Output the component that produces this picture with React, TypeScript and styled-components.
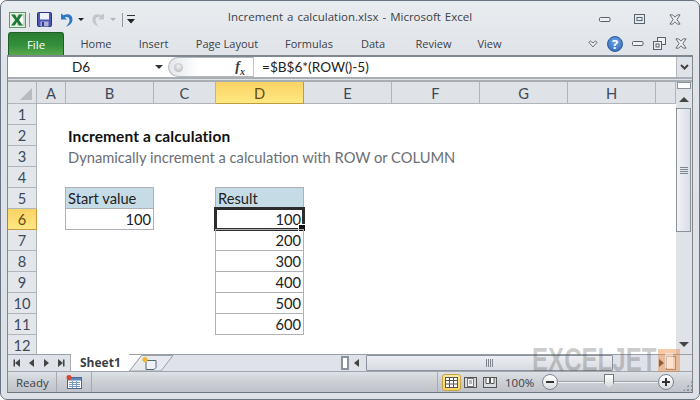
import React from "react";
import styled, { createGlobalStyle } from "styled-components";

const GlobalStyle = createGlobalStyle`
  html, body {
    margin: 0;
    padding: 0;
    background: #fff;
  }
  * {
    box-sizing: border-box;
  }
`;

const columns = ["A", "B", "C", "D", "E", "F", "G", "H", ""];
const rows = [1, 2, 3, 4, 5, 6, 7, 8, 9, 10, 11, 12];
const results: Record<number, string> = {
  6: "100",
  7: "200",
  8: "300",
  9: "400",
  10: "500",
  11: "600",
};

const App: React.FC = () => {
  function renderB(row: number) {
    if (row === 2) return <Cell $variant="title">Increment a calculation</Cell>;
    if (row === 3)
      return (
        <Cell $variant="subtitle">
          Dynamically increment a calculation with ROW or COLUMN
        </Cell>
      );
    if (row === 5) return <Cell $variant="head">Start value</Cell>;
    if (row === 6) return <Cell $variant="number">100</Cell>;
    return <Cell />;
  }

  function renderD(row: number) {
    if (row === 5) return <Cell $variant="head">Result</Cell>;
    if (results[row]) {
      return (
        <Cell $variant="number" $active={row === 6}>
          {results[row]}
        </Cell>
      );
    }
    return <Cell />;
  }

  return (
    <Window>
      <GlobalStyle />
      <TitleBar>
        <QuickAccess>
          <QatItem $gap={0}>
            <ExcelLogo />
          </QatItem>
          <QatDivider $gap={3} />
          <QatItem $gap={7}>
            <SaveIcon />
          </QatItem>
          <QatItem $gap={8}>
            <UndoIcon />
          </QatItem>
          <SmallCaret $gap={5} $muted={false} />
          <QatItem $gap={8}>
            <RedoIcon />
          </QatItem>
          <SmallCaret $gap={5} $muted />
          <QatDivider $gap={6} />
          <QatItem $gap={4}>
            <CustomizeIcon />
          </QatItem>
        </QuickAccess>
        <WindowTitle>Increment a calculation.xlsx - Microsoft Excel</WindowTitle>
        <WindowButtons>
          <MinimizeIcon />
          <MaximizeIcon />
          <CloseIcon />
        </WindowButtons>
      </TitleBar>

      <TabsRow>
        <FileTab>File</FileTab>
        <RibbonTab $w={64}>Home</RibbonTab>
        <RibbonTab $w={51}>Insert</RibbonTab>
        <RibbonTab $w={96}>Page Layout</RibbonTab>
        <RibbonTab $w={68}>Formulas</RibbonTab>
        <RibbonTab $w={60}>Data</RibbonTab>
        <RibbonTab $w={61}>Review</RibbonTab>
        <RibbonTab $w={51}>View</RibbonTab>
        <TabTools>
          <ChevronHeart />
          <HelpCircle>?</HelpCircle>
          <MinimizeIcon />
          <RestoreIcon />
          <CloseIcon />
        </TabTools>
      </TabsRow>

      <Frame>
        <FormulaBar>
          <NameBox>
            D6
            <NameCaret />
          </NameBox>
          <FormulaKnob>
            <KnobDot />
            <FxLabel>
              f<sub>x</sub>
            </FxLabel>
          </FormulaKnob>
          <FormulaInput>=$B$6*(ROW()-5)</FormulaInput>
          <FormulaExpand>
            <ExpandChevron />
          </FormulaExpand>
        </FormulaBar>

        <SheetArea>
          <Grid>
            <CornerCell>
              <CornerTriangle />
            </CornerCell>
            {columns.map((col, i) => (
              <ColumnHeader key={i} $active={col === "D"}>
                {col}
              </ColumnHeader>
            ))}
            {rows.map((row) => (
              <React.Fragment key={row}>
                <RowHeader $active={row === 6}>{row}</RowHeader>
                <Cell />
                {renderB(row)}
                <Cell />
                {renderD(row)}
                <Cell />
                <Cell />
                <Cell />
                <Cell />
                <Cell />
              </React.Fragment>
            ))}
          </Grid>
          <VerticalScroll>
            <SplitBoxTop>
              <span />
            </SplitBoxTop>
            <ArrowSlot>
              <ArrowUp />
            </ArrowSlot>
            <VerticalThumb>
              <Grip />
            </VerticalThumb>
            <ArrowSlotBottom>
              <ArrowDown />
            </ArrowSlotBottom>
          </VerticalScroll>
        </SheetArea>

        <SheetTabsRow>
          <NavButtons>
            <NavFirst />
            <NavPrev />
            <NavNext />
            <NavLast />
          </NavButtons>
          <SheetTab>Sheet1</SheetTab>
          <NewSheetTab />
          <TabStripFill />
          <SplitBoxSide>
            <span />
          </SplitBoxSide>
          <HorizontalTrack>
            <NavPrev />
            <HorizontalThumb>
              <VerticalGrip />
            </HorizontalThumb>
            <TrackEnd>
              <NavNext />
              <SplitBoxEnd>
                <span />
              </SplitBoxEnd>
            </TrackEnd>
          </HorizontalTrack>
          <ScrollCorner />
        </SheetTabsRow>

        <StatusBar>
          <ReadyLabel>Ready</ReadyLabel>
          <MacroSlot>
            <MacroIcon />
          </MacroSlot>
          <StatusRight>
            <ViewButton $active>
              <NormalViewIcon />
            </ViewButton>
            <ViewButton>
              <PageLayoutIcon />
            </ViewButton>
            <ViewButton>
              <PageBreakIcon />
            </ViewButton>
            <ZoomLabel>100%</ZoomLabel>
            <ZoomRound>
              <MinusGlyph />
            </ZoomRound>
            <ZoomLine>
              <ZoomThumb />
            </ZoomLine>
            <ZoomRound>
              <PlusGlyph />
            </ZoomRound>
            <ResizeGrip />
          </StatusRight>
        </StatusBar>
      </Frame>

      <Watermark>
        <WatermarkText>EXCELJET</WatermarkText>
        <WatermarkBox>
          <WatermarkMark />
        </WatermarkBox>
      </Watermark>
    </Window>
  );
};

export default App;

/* icons */

const ExcelLogo = () => (
  <svg width="17" height="16" viewBox="0 0 17 16">
    <rect x="0.500" y="0.500" width="16" height="15" fill="#e8f1e4" stroke="#5e9a68" />
    <rect x="9" y="3" width="6" height="10" fill="#fff" stroke="#9cc09f" />
    <path d="M2 2.500h4l2 3.400 2-3.400h3.500L10 8l3.800 5.500H10L8 10l-2.200 3.500H2L6.200 8z" fill="#1f7a38" />
  </svg>
);

const SaveIcon = () => (
  <svg width="15" height="15" viewBox="0 0 15 15">
    <rect x="0.500" y="0.500" width="14" height="14" rx="1" fill="#4a55b4" stroke="#2b3480" />
    <rect x="3" y="1" width="9" height="6.500" fill="#eef0fa" />
    <rect x="3.500" y="9.500" width="8" height="5" fill="#aab0dc" />
    <rect x="5" y="10" width="2" height="4" fill="#34398a" />
  </svg>
);

const UndoIcon = () => (
  <svg width="13" height="16" viewBox="0 0 13 16">
    <path
      d="M1 1.500v6h6L4.800 5.300C7.500 4.200 10 6 9.500 9c-.3 2-1.800 3.800-3.500 5.500 3.500-.8 6.500-3.500 6.500-7.300C12.500 3 8 .8 3.500 3.300z"
      fill="#2f78c4"
    />
  </svg>
);

const RedoIcon = () => (
  <svg width="13" height="16" viewBox="0 0 13 16">
    <path
      d="M12 1.500v6H6l2.200-2.200C5.500 4.200 3 6 3.500 9c.3 2 1.800 3.800 3.500 5.500C3.500 13.700.5 11 .5 7.200.5 3 5 .8 9.500 3.300z"
      fill="#c3c7cc"
    />
  </svg>
);

const CustomizeIcon = () => (
  <svg width="8" height="9" viewBox="0 0 8 9">
    <rect x="0" y="0" width="8" height="1" fill="#333" />
    <path d="M0 4h8L4 8.500z" fill="#222" />
  </svg>
);

const MinimizeIcon = () => (
  <svg width="12" height="7" viewBox="0 0 12 7">
    <rect x="0.500" y="1.500" width="10.500" height="4" rx="1" fill="#eef0f3" stroke="#59626d" />
  </svg>
);

const MaximizeIcon = () => (
  <svg width="12" height="11" viewBox="0 0 12 11">
    <rect x="0.500" y="0.500" width="10" height="9" fill="none" stroke="#59626d" />
    <rect x="3" y="3.500" width="5" height="3" fill="#eef0f3" stroke="#59626d" />
  </svg>
);

const RestoreIcon = () => (
  <svg width="13" height="13" viewBox="0 0 13 13">
    <rect x="4.500" y="0.500" width="8" height="7" fill="#eef0f3" stroke="#59626d" />
    <rect x="0.500" y="4.500" width="8" height="8" fill="#eef0f3" stroke="#59626d" />
    <rect x="3" y="7" width="3" height="3" fill="none" stroke="#59626d" />
  </svg>
);

const CloseIcon = () => (
  <svg width="12" height="11" viewBox="0 0 13 11">
    <path
      d="M1 .5h3l2.500 2.500L9 .5h3L8.500 5.500 12 10.500H9L6.500 8 4 10.500H1L4.500 5.500z"
      fill="#eef0f3"
      stroke="#59626d"
    />
  </svg>
);

const ChevronHeart = () => (
  <svg width="10" height="8" viewBox="0 0 12 9">
    <path d="M1 2.500L3 1l3 2.200L9 1l2 1.500L6 8z" fill="#eef0f3" stroke="#4d5660" />
  </svg>
);

const NewSheetTab = () => (
  <svg width="45" height="17" viewBox="0 0 45 17">
    <path d="M0 0h12L0 16z" fill="#fff" />
    <path d="M0.500 16L12.500 .5H44L32 16z" fill="#e6e9ee" stroke="#9aa0a7" />
    <path d="M17 5.500h10v7l-2 2H17z" fill="#eef2f7" stroke="#55657a" />
    <circle cx="16" cy="4.500" r="2.600" fill="#f2b632" />
  </svg>
);

const MacroIcon = () => (
  <svg width="16" height="14" viewBox="0 0 16 14">
    <rect x="1.500" y="2.500" width="14" height="11" fill="#fff" stroke="#4a6a94" />
    <rect x="2" y="3" width="13" height="2.500" fill="#5f86b8" />
    <path d="M3 7.500h11M3 9.500h11M3 11.500h11M6.500 6v7M10.500 6v7" stroke="#7c9cc4" />
    <circle cx="3" cy="2.500" r="2.500" fill="#d8452a" />
  </svg>
);

const NormalViewIcon = () => (
  <svg width="13" height="11" viewBox="0 0 13 11">
    <rect x="0.500" y="0.500" width="12" height="10" fill="#fff" stroke="#555" />
    <path d="M0.500 3.500h12M0.500 7h12M4.500 .5v10M8.500 .5v10" stroke="#555" />
  </svg>
);

const PageLayoutIcon = () => (
  <svg width="13" height="11" viewBox="0 0 13 11">
    <rect x="0.500" y="0.500" width="12" height="10" fill="#d8dadd" stroke="#555" />
    <rect x="3.500" y="1.500" width="6" height="8" fill="#f4f5f6" stroke="#777" />
    <path d="M5 4h3M5 6h3" stroke="#777" />
  </svg>
);

const PageBreakIcon = () => (
  <svg width="14" height="11" viewBox="0 0 14 11">
    <rect x="0.500" y="0.500" width="13" height="10" fill="#d8dadd" stroke="#555" />
    <path d="M3 .5h3.500v6H3zM7.500 .5H11v6H7.500z" fill="#fff" stroke="#555" />
  </svg>
);

const ExpandChevron = () => (
  <svg width="9" height="6" viewBox="0 0 9 6">
    <path d="M1 1l3.500 3.500L8 1" fill="none" stroke="#444" strokeWidth="2" />
  </svg>
);

/* layout */

const Window = styled.div`
  position: relative;
  width: 700px;
  height: 400px;
  overflow: hidden;
  display: flex;
  flex-direction: column;
  background: linear-gradient(#e9ecef, #dfe3e8 60px, #dde1e6);
  border: 1px solid #6a7480;
  border-radius: 7px;
  font-family: "Open Sans", "Liberation Sans", sans-serif;
  color: #3b3f46;
`;

const TitleBar = styled.div`
  position: relative;
  height: 31px;
  flex: none;
  display: flex;
  align-items: center;
  padding-left: 8px;
`;

const QuickAccess = styled.div`
  display: flex;
  align-items: center;
  margin-top: 6px;
`;

const QatItem = styled.div<{ $gap: number }>`
  display: flex;
  margin-left: ${(p) => p.$gap}px;
`;

const QatDivider = styled.div<{ $gap: number }>`
  width: 1px;
  height: 14px;
  margin-left: ${(p) => p.$gap}px;
  background: #8f979f;
`;

const SmallCaret = styled.span<{ $muted: boolean; $gap: number }>`
  width: 0;
  height: 0;
  margin-left: ${(p) => p.$gap}px;
  border-left: 3px solid transparent;
  border-right: 3px solid transparent;
  border-top: 3px solid ${(p) => (p.$muted ? "#b0b4b9" : "#222")};
`;

const WindowTitle = styled.div`
  position: absolute;
  left: 0;
  right: 0;
  top: 7px;
  text-align: center;
  font-size: 11.5px;
  line-height: 18px;
  color: #3c4148;
  word-spacing: 1px;
`;

const WindowButtons = styled.div`
  margin-left: auto;
  margin-top: 5px;
  width: 82px;
  margin-right: 18px;
  display: flex;
  align-items: center;
  justify-content: space-between;
`;

const TabsRow = styled.div`
  height: 23px;
  flex: none;
  display: flex;
  align-items: stretch;
  padding-left: 7px;
  padding-right: 12px;
`;

const FileTab = styled.div`
  width: 56px;
  display: flex;
  align-items: center;
  justify-content: center;
  padding-top: 1px;
  color: #fff;
  font-size: 11.5px;
  border: 1px solid #1f5d2b;
  border-bottom: 0;
  border-radius: 3px 3px 0 0;
  background: linear-gradient(#2a7d33, #348f3b 55%, #58a94b);
`;

const RibbonTab = styled.div<{ $w: number }>`
  width: ${(p) => p.$w}px;
  display: flex;
  align-items: center;
  justify-content: center;
  font-size: 11px;
  color: #3c4148;
`;

const TabTools = styled.div`
  margin-left: auto;
  display: flex;
  align-items: center;
  gap: 9px;
`;

const HelpCircle = styled.div`
  width: 16px;
  height: 16px;
  border-radius: 50%;
  display: flex;
  align-items: center;
  justify-content: center;
  color: #fff;
  font-size: 13px;
  font-weight: 700;
  background: radial-gradient(circle at 50% 35%, #6fa3e4, #2a66bb);
  border: 1px solid #2a5c9e;
`;

const Frame = styled.div`
  flex: 1;
  margin-left: 6px;
  margin-right: 6px;
  margin-bottom: 6px;
  display: flex;
  flex-direction: column;
  border-top: 2px solid #7f8791;
  border-left: 1px solid #7f8791;
  border-right: 1px solid #7f8791;
  border-bottom: 1px solid #6e7680;
  min-height: 0;
`;

const FormulaBar = styled.div`
  height: 22px;
  flex: none;
  display: flex;
  align-items: stretch;
  background: #fff;
  border-bottom: 2px solid #a9aeb4;
  font-family: Lato, "Open Sans", sans-serif;
  font-size: 13.6px;
  color: #222;
`;

const NameBox = styled.div`
  position: relative;
  width: 160px;
  padding-left: 64px;
  display: flex;
  align-items: center;
`;

const NameCaret = styled.span`
  position: absolute;
  right: 5px;
  top: 8px;
  border-left: 4px solid transparent;
  border-right: 4px solid transparent;
  border-top: 4px solid #333;
`;

const FormulaKnob = styled.div`
  width: 85px;
  display: flex;
  align-items: center;
  padding-left: 5px;
  padding-right: 8px;
  border: 1px solid #b5b9bf;
  border-right: 0;
  border-radius: 11px 0 0 11px;
  background: linear-gradient(90deg, #e4e6ea, #fff 35%);
`;

const KnobDot = styled.span`
  width: 9px;
  height: 9px;
  border-radius: 50%;
  background: radial-gradient(circle at 50% 40%, #f3f3f3, #a9adb2);
`;

const FxLabel = styled.div`
  margin-left: auto;
  font-family: "Liberation Serif", serif;
  font-style: italic;
  font-weight: 700;
  font-size: 14px;
  line-height: 18px;
  color: #3a3a3a;
  sub {
    font-size: 10px;
    line-height: 0;
  }
`;

const FormulaInput = styled.div`
  flex: 1;
  padding-left: 8px;
  display: flex;
  align-items: center;
  border-left: 1px solid #c3c7cc;
`;

const FormulaExpand = styled.div`
  width: 16px;
  display: flex;
  align-items: center;
  justify-content: center;
  background: #dfe2e6;
  border-left: 1px solid #b4b8bd;
`;

const SheetArea = styled.div`
  height: 274px;
  flex: none;
  display: flex;
  border-top: 2px solid #a9aeb4;
  margin-top: 1px;
`;

const Grid = styled.div`
  flex: 1;
  display: grid;
  grid-template-columns: 29px 29px 88px 62px 88px 88px 88px 88px 88px 1fr;
  grid-template-rows: 22px;
  grid-auto-rows: 21px;
  overflow: hidden;
  background: #fff;
  font-family: Lato, "Open Sans", sans-serif;
  font-size: 14.7px;
  color: #222;
`;

const CornerCell = styled.div`
  position: relative;
  background: #dfe2e6;
  border-right: 1px solid #b1b5ba;
  border-bottom: 1px solid #b1b5ba;
`;

const CornerTriangle = styled.span`
  position: absolute;
  right: 4px;
  bottom: 3px;
  border-left: 12px solid transparent;
  border-bottom: 12px solid #b8bcc1;
`;

const ColumnHeader = styled.div<{ $active?: boolean }>`
  display: flex;
  align-items: center;
  justify-content: center;
  color: ${(p) => (p.$active ? "#6a4a12" : "#3e4a5a")};
  background: ${(p) =>
    p.$active ? "linear-gradient(#fbd264, #ffe882)" : "#dfe2e6"};
  border-right: 1px solid ${(p) => (p.$active ? "#c49a3a" : "#b1b5ba")};
  border-bottom: 1px solid ${(p) => (p.$active ? "#c49a3a" : "#b1b5ba")};
`;

const RowHeader = styled.div<{ $active?: boolean }>`
  display: flex;
  align-items: center;
  justify-content: center;
  color: ${(p) => (p.$active ? "#6a4a12" : "#3e4a5a")};
  background: ${(p) =>
    p.$active ? "linear-gradient(#fbd264, #ffe882)" : "#e3e6ea"};
  border-right: 1px solid ${(p) => (p.$active ? "#c49a3a" : "#b1b5ba")};
  border-bottom: 1px solid ${(p) => (p.$active ? "#c49a3a" : "#b1b5ba")};
`;

type CellVariant = "title" | "subtitle" | "head" | "number";

const Cell = styled.div<{ $variant?: CellVariant; $active?: boolean }>`
  position: relative;
  display: flex;
  align-items: center;
  white-space: nowrap;
  padding: 0 2px;
  min-width: 0;
  ${(p) => p.$variant === "title" && "font-weight: 700; font-size: 15.5px; letter-spacing: 0.1px; color: #111;"}
  ${(p) => p.$variant === "subtitle" && "color: #6b6f75;"}
  ${(p) =>
    (p.$variant === "head" || p.$variant === "number") &&
    "margin: -1px 0 0 -1px; border: 1px solid #aeb1b5;"}
  ${(p) => p.$variant === "head" && "background: #c5dce7;"}
  ${(p) => p.$variant === "number" && "justify-content: flex-end;"}
  ${(p) =>
    p.$active &&
    `
    &::before {
      content: "";
      position: absolute;
      inset: -2px;
      border: 3px solid #2d2d2d;
    }
    &::after {
      content: "";
      position: absolute;
      right: -3px;
      bottom: -3px;
      width: 6px;
      height: 6px;
      background: #111;
      border: 1px solid #fff;
    }
  `}
`;

const VerticalScroll = styled.div`
  width: 16px;
  flex: none;
  display: flex;
  flex-direction: column;
  background: #dfe2e6;
`;

const SplitBoxTop = styled.div`
  height: 9px;
  padding: 0 1px;
  span {
    display: block;
    height: 7px;
    background: #fff;
    border: 1px solid #8b929a;
  }
`;

const ArrowSlot = styled.div`
  height: 17px;
  display: flex;
  align-items: center;
  justify-content: center;
`;

const ArrowSlotBottom = styled(ArrowSlot)`
  margin-top: auto;
  height: 20px;
`;

const ArrowUp = styled.span`
  border-left: 5px solid transparent;
  border-right: 5px solid transparent;
  border-bottom: 5px solid #444;
`;

const ArrowDown = styled.span`
  border-left: 5px solid transparent;
  border-right: 5px solid transparent;
  border-top: 5px solid #444;
`;

const VerticalThumb = styled.div`
  height: 124px;
  margin-right: 1px;
  display: flex;
  align-items: center;
  justify-content: center;
  border: 1px solid #8b929a;
  background: linear-gradient(90deg, #f1f2f6, #dadee6);
`;

const Grip = styled.div`
  width: 8px;
  height: 7px;
  background: repeating-linear-gradient(#7f858c 0 1px, transparent 1px 2px);
`;

const VerticalGrip = styled.div`
  width: 7px;
  height: 8px;
  background: repeating-linear-gradient(90deg, #7f858c 0 1px, transparent 1px 2px);
`;

const SheetTabsRow = styled.div`
  height: 17px;
  flex: none;
  display: flex;
  align-items: stretch;
  background: #dfe2e8;
  border-top: 1px solid #9aa0a7;
`;

const NavButtons = styled.div`
  width: 63px;
  padding: 0 7px;
  display: flex;
  align-items: center;
  justify-content: space-between;
  border-right: 1px solid #a9aeb4;
`;

const NavFirst = styled.span`
  border-right: 5px solid #444;
  border-top: 4px solid transparent;
  border-bottom: 4px solid transparent;
  box-shadow: -2px 0 0 -0.5px #444;
`;

const NavPrev = styled.span`
  flex: none;
  border-right: 5px solid #444;
  border-top: 4px solid transparent;
  border-bottom: 4px solid transparent;
`;

const NavNext = styled.span`
  flex: none;
  border-left: 5px solid #444;
  border-top: 4px solid transparent;
  border-bottom: 4px solid transparent;
`;

const NavLast = styled(NavNext)`
  box-shadow: 2px 0 0 -0.5px #444;
`;

const SheetTab = styled.div`
  width: 58px;
  margin-top: -1px;
  padding-left: 9px;
  background: #fff;
  font-weight: 700;
  font-size: 12px;
  line-height: 18px;
  color: #3b3f46;
`;

const TabStripFill = styled.div`
  flex: 1;
`;

const SplitBoxSide = styled.div`
  width: 8px;
  padding: 1px 0;
  span {
    display: block;
    height: 100%;
    background: #fff;
    border: 2px solid #8b929a;
  }
`;

const HorizontalTrack = styled.div`
  width: 327px;
  display: flex;
  align-items: center;
  padding-left: 5px;
`;

const HorizontalThumb = styled.div`
  width: 247px;
  height: 16px;
  margin-left: 7px;
  flex: none;
  display: flex;
  align-items: center;
  justify-content: center;
  border: 1px solid #8b929a;
  border-radius: 1px;
  background: linear-gradient(#eceef2, #d8dbe2);
`;

const TrackEnd = styled.div`
  flex: 1;
  height: 100%;
  display: flex;
  align-items: center;
  justify-content: flex-end;
  gap: 2px;
`;

const SplitBoxEnd = styled.div`
  width: 10px;
  height: 100%;
  padding: 1px 0;
  span {
    display: block;
    height: 100%;
    background: #fff;
    border: 1px solid #8b929a;
  }
`;

const ScrollCorner = styled.div`
  width: 16px;
  background: #dfe2e6;
`;

const StatusBar = styled.div`
  flex: 1;
  display: flex;
  align-items: stretch;
  background: linear-gradient(#dee1e5, #cdd0d5 45%, #bfc3c9);
  border-top: 1px solid #9fa5ac;
  font-size: 11.5px;
`;

const ReadyLabel = styled.div`
  width: 49px;
  padding-left: 8px;
  display: flex;
  align-items: center;
  color: #3c4148;
  border-right: 1px solid #a7abb1;
`;

const MacroSlot = styled.div`
  width: 35px;
  display: flex;
  align-items: center;
  justify-content: center;
  border-right: 1px solid #a7abb1;
`;

const StatusRight = styled.div`
  margin-left: auto;
  display: flex;
  align-items: center;
  padding-left: 4px;
  border-left: 1px solid #a7abb1;
`;

const ViewButton = styled.div<{ $active?: boolean }>`
  width: 19px;
  height: 17px;
  display: flex;
  align-items: center;
  justify-content: center;
  ${(p) =>
    p.$active &&
    "background: linear-gradient(#fde9a0, #fbd25e); border: 1px solid #c9a13f; border-radius: 3px;"}
`;

const ZoomLabel = styled.div`
  margin-left: 6px;
  width: 37px;
  color: #3c4148;
`;

const ZoomRound = styled.div`
  width: 16px;
  height: 16px;
  flex: none;
  border-radius: 50%;
  display: flex;
  align-items: center;
  justify-content: center;
  border: 1px solid #7e858d;
  background: linear-gradient(#fff, #d9dce0);
`;

const MinusGlyph = styled.span`
  width: 8px;
  height: 2px;
  background: #333;
`;

const PlusGlyph = styled.span`
  position: relative;
  width: 8px;
  height: 2px;
  background: #333;
  &::after {
    content: "";
    position: absolute;
    left: 3px;
    top: -3px;
    width: 2px;
    height: 8px;
    background: #333;
  }
`;

const ZoomLine = styled.div`
  position: relative;
  width: 100px;
  height: 2px;
  background: #f0f1f3;
  border-top: 1px solid #9ca1a7;
`;

const ZoomThumb = styled.span`
  position: absolute;
  left: 46px;
  top: -8px;
  width: 10px;
  height: 14px;
  background: linear-gradient(#fff, #d3d6da);
  border: 1px solid #777;
  border-bottom: 0;
  clip-path: polygon(0 0, 100% 0, 100% 65%, 50% 100%, 0 65%);
`;

const ResizeGrip = styled.div`
  width: 18px;
  height: 100%;
  background: radial-gradient(circle, #8d9299 1px, transparent 1.2px) 0 0 / 4px 4px;
  clip-path: polygon(100% 45%, 100% 100%, 45% 100%);
`;

const Watermark = styled.div`
  position: absolute;
  left: 531px;
  top: 347px;
  height: 24px;
  display: flex;
  align-items: center;
  pointer-events: none;
`;

const WatermarkText = styled.span`
  display: inline-block;
  width: 126px;
  font-family: "Liberation Sans", sans-serif;
  font-weight: 700;
  font-size: 33px;
  line-height: 24px;
  white-space: nowrap;
  color: rgba(80, 80, 80, 0.28);
  transform: scaleX(0.73);
  transform-origin: 0 50%;
`;

const WatermarkBox = styled.span`
  width: 22px;
  height: 23px;
  display: flex;
  align-items: center;
  justify-content: center;
  background: rgba(240, 130, 50, 0.42);
`;

const WatermarkMark = styled.span`
  width: 8px;
  height: 15px;
  background: rgba(255, 255, 255, 0.45);
`;
